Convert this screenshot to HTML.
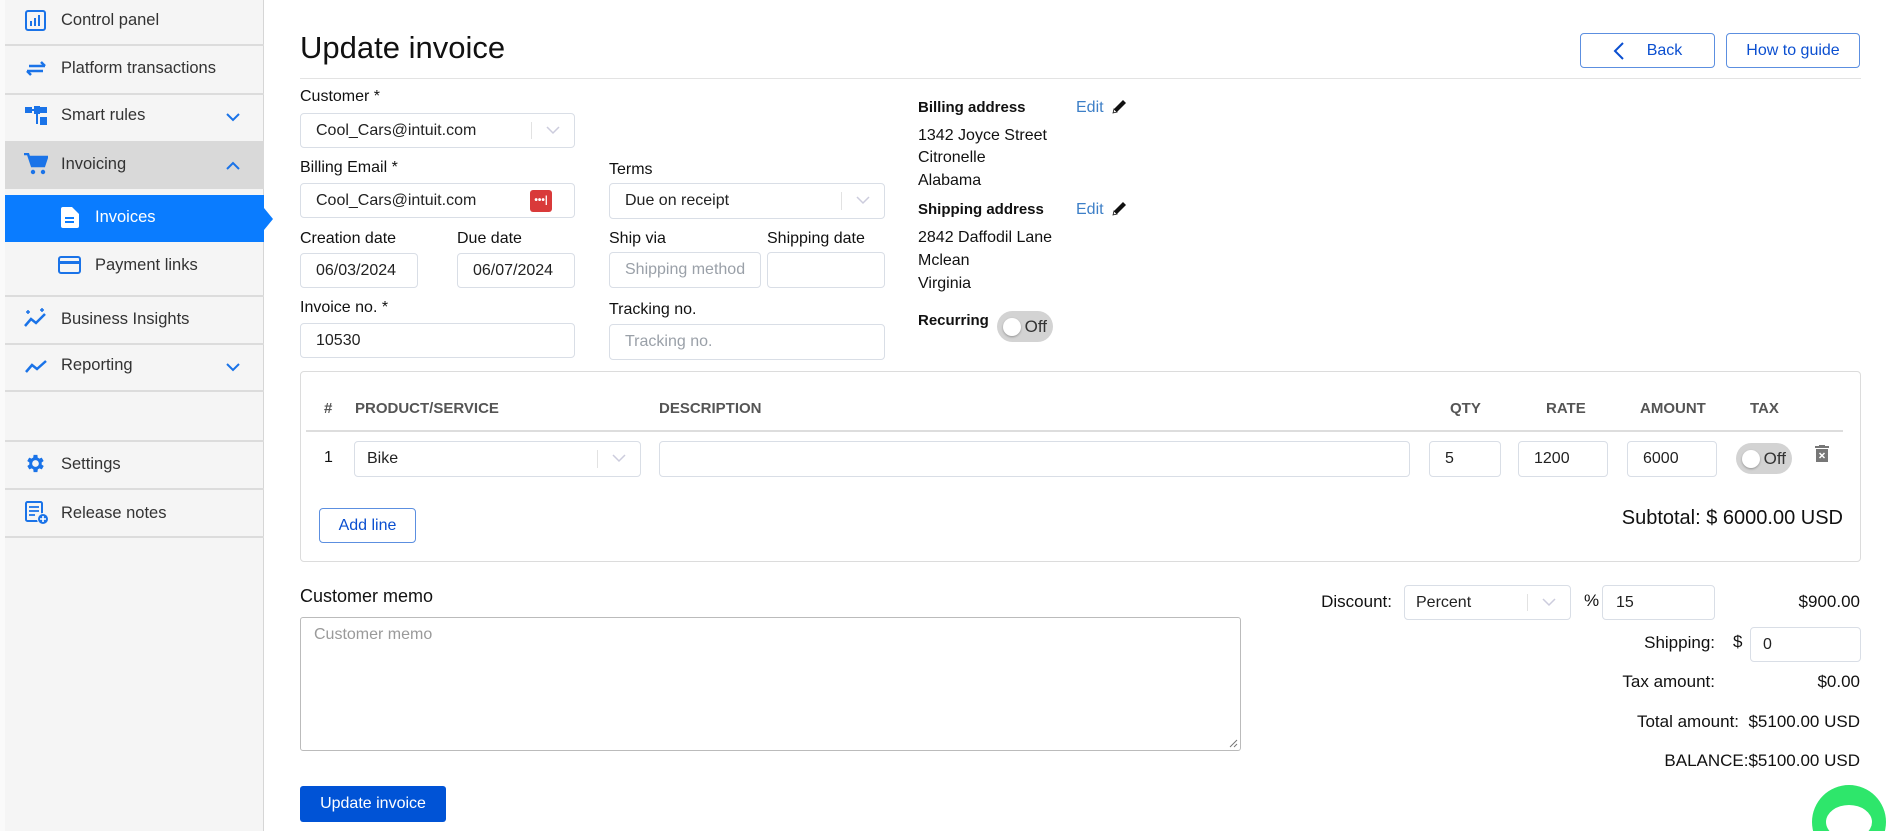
<!DOCTYPE html>
<html><head><meta charset="utf-8"><style>
*{box-sizing:border-box;margin:0;padding:0}
body{width:1900px;height:831px;overflow:hidden;background:#fff;font-family:"Liberation Sans",Arial,sans-serif;color:#111;position:relative;font-size:16px}
.a{position:absolute}
.sb{left:5px;top:0;width:259px;height:831px;background:#f5f5f5;border-right:1px solid #d6d6d6}
.sbl{left:0;top:0;width:5px;height:831px;background:#fafafa}
.hr{position:absolute;left:5px;width:259px;height:2px;background:#dcdcdc}
.it{position:absolute;left:61px;font-size:16.5px;color:#333;line-height:20px}
.ic{position:absolute}
.lbl{position:absolute;font-size:16px;color:#111;line-height:18px}
.inp{position:absolute;border:1px solid #d9dee6;border-radius:4px;background:#fff;font-size:16px;color:#222;padding-left:15px;display:flex;align-items:center}
.ph{color:#9aa0a8}
.sel::after{content:"";position:absolute;right:42px;top:8px;height:calc(100% - 16px);border-left:1px solid #e2e2e2}
.chev{position:absolute;right:14px;top:50%;margin-top:-6px}
.btn{position:absolute;border:1px solid #5c8fe0;border-radius:4px;color:#0b4fd0;font-size:16px;display:flex;align-items:center;justify-content:center;background:#fff}
.th{position:absolute;top:400px;font-size:15px;font-weight:bold;color:#555;line-height:18px}
.tog{position:absolute;background:#d3d3d3;border-radius:16px}
.tog .k{position:absolute;left:6px;top:50%;margin-top:-9px;width:18px;height:18px;border-radius:50%;background:#fff;box-shadow:0 1px 2px rgba(0,0,0,.3)}
.tog span{position:absolute;right:6px;top:50%;margin-top:-10px;font-size:17px;color:#333}
.r{position:absolute;font-size:16px;color:#111;text-align:right}
.b{font-weight:bold;font-size:15px}
</style></head><body>
<div class="a sbl"></div>
<div class="a sb"></div>
<div class="hr" style="top:44px"></div>
<div class="hr" style="top:93px"></div>
<div class="a" style="left:5px;top:141px;width:259px;height:48px;background:#d9d9d9"></div>
<div class="a" style="left:5px;top:195px;width:259px;height:47px;background:#0a7cff"></div>
<svg class="a" style="left:264px;top:208px" width="10" height="22"><path d="M0 0L9 11L0 22Z" fill="#0a7cff"/></svg>
<div class="hr" style="top:295px"></div>
<div class="hr" style="top:343px"></div>
<div class="hr" style="top:390px"></div>
<div class="hr" style="top:440px"></div>
<div class="hr" style="top:488px"></div>
<div class="hr" style="top:536px"></div>

<svg class="ic" style="left:25px;top:10px" width="21" height="21" viewBox="0 0 21 21"><rect x="1" y="1" width="19" height="19" rx="2" fill="none" stroke="#1a73e8" stroke-width="2"/><rect x="5" y="11" width="2" height="5" fill="#1a73e8"/><rect x="9" y="8" width="2" height="8" fill="#1a73e8"/><rect x="13" y="5" width="2" height="11" fill="#1a73e8"/></svg>
<div class="it" style="top:10px">Control panel</div>
<svg class="ic" style="left:25px;top:59px" width="22" height="18" viewBox="0 0 22 18"><path d="M4 7H20M16 3l4 4M2 12H18M6 16l-4-4" stroke="#1a73e8" stroke-width="2.5" fill="none"/></svg>
<div class="it" style="top:58px">Platform transactions</div>
<svg class="ic" style="left:25px;top:106px" width="23" height="20" viewBox="0 0 23 20"><rect x="0" y="1" width="7" height="6" fill="#1a73e8"/><rect x="9" y="0" width="6" height="8" fill="#1a73e8"/><rect x="15" y="1" width="7" height="6" fill="#1a73e8"/><rect x="11" y="8" width="2" height="10" fill="#1a73e8"/><rect x="15" y="11" width="7" height="8" fill="#1a73e8"/><rect x="7" y="3" width="3" height="2" fill="#1a73e8"/></svg>
<div class="it" style="top:105px">Smart rules</div>
<svg class="ic" style="left:226px;top:113px" width="14" height="9"><path d="M1 1l6 6 6-6" stroke="#1a73e8" stroke-width="2" fill="none"/></svg>
<svg class="ic" style="left:24px;top:153px" width="24" height="22" viewBox="0 0 24 22"><path d="M0 1h4l4 12h12l3-9H6" stroke="#1a73e8" stroke-width="2.5" fill="none"/><path d="M6 4h17l-3 9H8z" fill="#1a73e8"/><circle cx="9" cy="19" r="2.2" fill="#1a73e8"/><circle cx="19" cy="19" r="2.2" fill="#1a73e8"/></svg>
<div class="it" style="top:154px">Invoicing</div>
<svg class="ic" style="left:226px;top:161px" width="14" height="9"><path d="M1 8l6-6 6 6" stroke="#1a73e8" stroke-width="2" fill="none"/></svg>
<svg class="ic" style="left:61px;top:207px" width="18" height="21" viewBox="0 0 18 21"><path d="M2 0h9l7 7v12a2 2 0 0 1-2 2H2a2 2 0 0 1-2-2V2a2 2 0 0 1 2-2z" fill="#fff"/><path d="M4 11h9M4 15h9" stroke="#0a7cff" stroke-width="2"/></svg>
<div class="it" style="top:207px;left:95px;color:#fff">Invoices</div>
<svg class="ic" style="left:58px;top:256px" width="23" height="18" viewBox="0 0 23 18"><rect x="1" y="1" width="21" height="16" rx="2" fill="none" stroke="#1a73e8" stroke-width="2"/><rect x="1" y="5" width="21" height="3" fill="#1a73e8"/></svg>
<div class="it" style="top:255px;left:95px">Payment links</div>
<svg class="ic" style="left:23px;top:308px" width="26" height="20" viewBox="0 0 26 20"><path d="M2 18l6-7 5 4 9-9" stroke="#1a73e8" stroke-width="2.5" fill="none"/><path d="M5 2v4M3 4h4M19 0v4M17 2h4" stroke="#1a73e8" stroke-width="1.5"/></svg>
<div class="it" style="top:309px">Business Insights</div>
<svg class="ic" style="left:25px;top:359px" width="23" height="14" viewBox="0 0 23 14"><path d="M1 13l6-7 5 4 9-8" stroke="#1a73e8" stroke-width="2.5" fill="none"/></svg>
<div class="it" style="top:355px">Reporting</div>
<svg class="ic" style="left:226px;top:363px" width="14" height="9"><path d="M1 1l6 6 6-6" stroke="#1a73e8" stroke-width="2" fill="none"/></svg>
<svg class="ic" style="left:24px;top:452px" width="23" height="23" viewBox="0 0 24 24"><path fill="#1a73e8" d="M19.4 13a7.5 7.5 0 0 0 0-2l2.1-1.6-2-3.5-2.5 1a7.3 7.3 0 0 0-1.7-1L15 3h-4l-.4 2.9a7.3 7.3 0 0 0-1.7 1l-2.5-1-2 3.5L6.6 11a7.5 7.5 0 0 0 0 2l-2.1 1.6 2 3.5 2.5-1a7.3 7.3 0 0 0 1.7 1L11 21h4l.4-2.9a7.3 7.3 0 0 0 1.7-1l2.5 1 2-3.5zM13 15.5a3.5 3.5 0 1 1 0-7 3.5 3.5 0 0 1 0 7z" transform="translate(-1 0)"/></svg>
<div class="it" style="top:454px">Settings</div>
<svg class="ic" style="left:25px;top:501px" width="24" height="24" viewBox="0 0 24 24"><rect x="1" y="1" width="16" height="19" rx="1.5" fill="none" stroke="#1a73e8" stroke-width="2"/><path d="M4 6h10M4 10h10M4 14h6" stroke="#1a73e8" stroke-width="1.8"/><circle cx="18" cy="18" r="5.5" fill="#1a73e8" stroke="#f5f5f5" stroke-width="1"/><path d="M18 15v6M15 18h6" stroke="#fff" stroke-width="1.6"/></svg>
<div class="it" style="top:503px">Release notes</div>

<!-- Header -->
<div class="a" style="left:300px;top:30px;font-size:31px;color:#111">Update invoice</div>
<div class="a" style="left:300px;top:78px;width:1561px;height:1px;background:#e3e3e3"></div>
<div class="btn" style="left:1580px;top:33px;width:135px;height:35px"><svg width="12" height="18" style="margin-right:22px"><path d="M10 1L2 9l8 8" stroke="#0b4fd0" stroke-width="2" fill="none"/></svg>Back</div>
<div class="btn" style="left:1726px;top:33px;width:134px;height:35px">How to guide</div>

<!-- Form -->
<div class="lbl" style="left:300px;top:88px">Customer *</div>
<div class="inp sel" style="left:300px;top:113px;width:275px;height:35px">Cool_Cars@intuit.com<svg class="chev" width="14" height="10"><path d="M1 2l6 6 6-6" stroke="#ccd" stroke-width="1.5" fill="none"/></svg></div>
<div class="lbl" style="left:300px;top:159px">Billing Email *</div>
<div class="inp" style="left:300px;top:183px;width:275px;height:35px">Cool_Cars@intuit.com<div class="a" style="left:229px;top:6px;width:22px;height:22px;background:#d93a3a;border-radius:3px;color:#fff;font-size:10px;line-height:22px;text-align:center;font-weight:bold">•••|</div></div>
<div class="lbl" style="left:609px;top:161px">Terms</div>
<div class="inp sel" style="left:609px;top:183px;width:276px;height:36px">Due on receipt<svg class="chev" width="14" height="10"><path d="M1 2l6 6 6-6" stroke="#ccd" stroke-width="1.5" fill="none"/></svg></div>
<div class="lbl" style="left:300px;top:230px">Creation date</div>
<div class="lbl" style="left:457px;top:230px">Due date</div>
<div class="lbl" style="left:609px;top:230px">Ship via</div>
<div class="lbl" style="left:767px;top:230px">Shipping date</div>
<div class="inp" style="left:300px;top:253px;width:118px;height:35px">06/03/2024</div>
<div class="inp" style="left:457px;top:253px;width:118px;height:35px">06/07/2024</div>
<div class="inp ph" style="left:609px;top:252px;width:152px;height:36px">Shipping method</div>
<div class="inp" style="left:767px;top:252px;width:118px;height:36px"></div>
<div class="lbl" style="left:300px;top:299px">Invoice no. *</div>
<div class="inp" style="left:300px;top:323px;width:275px;height:35px">10530</div>
<div class="lbl" style="left:609px;top:301px">Tracking no.</div>
<div class="inp ph" style="left:609px;top:324px;width:276px;height:36px">Tracking no.</div>

<div class="lbl b" style="left:918px;top:99px">Billing address</div>
<div class="lbl" style="left:1076px;top:99px;color:#3d7fc7">Edit</div>
<svg class="a" style="left:1111px;top:98px" width="16" height="17" viewBox="0 0 16 17"><path d="M2 15l1-4 9-9 3 3-9 9z" fill="#111"/><path d="M2 15l1-4 3 3z" fill="#fff" stroke="#111" stroke-width=".8"/></svg>
<div class="lbl" style="left:918px;top:127px">1342 Joyce Street</div>
<div class="lbl" style="left:918px;top:149px">Citronelle</div>
<div class="lbl" style="left:918px;top:172px">Alabama</div>
<div class="lbl b" style="left:918px;top:201px">Shipping address</div>
<div class="lbl" style="left:1076px;top:201px;color:#3d7fc7">Edit</div>
<svg class="a" style="left:1111px;top:200px" width="16" height="17" viewBox="0 0 16 17"><path d="M2 15l1-4 9-9 3 3-9 9z" fill="#111"/><path d="M2 15l1-4 3 3z" fill="#fff" stroke="#111" stroke-width=".8"/></svg>
<div class="lbl" style="left:918px;top:229px">2842 Daffodil Lane</div>
<div class="lbl" style="left:918px;top:252px">Mclean</div>
<div class="lbl" style="left:918px;top:275px">Virginia</div>
<div class="lbl b" style="left:918px;top:312px">Recurring</div>
<div class="tog" style="left:997px;top:311px;width:56px;height:31px"><div class="k"></div><span>Off</span></div>

<!-- Table card -->
<div class="a" style="left:300px;top:371px;width:1561px;height:191px;border:1px solid #dcdcdc;border-radius:4px"></div>
<div class="th" style="left:324px">#</div>
<div class="th" style="left:355px">PRODUCT/SERVICE</div>
<div class="th" style="left:659px">DESCRIPTION</div>
<div class="th" style="left:1450px">QTY</div>
<div class="th" style="left:1546px">RATE</div>
<div class="th" style="left:1640px">AMOUNT</div>
<div class="th" style="left:1750px">TAX</div>
<div class="a" style="left:306px;top:430px;width:1537px;height:2px;background:#ddd"></div>
<div class="lbl" style="left:324px;top:449px">1</div>
<div class="inp sel" style="left:354px;top:441px;width:287px;height:36px;padding-left:12px">Bike<svg class="chev" width="14" height="10"><path d="M1 2l6 6 6-6" stroke="#ccd" stroke-width="1.5" fill="none"/></svg></div>
<div class="inp" style="left:659px;top:441px;width:751px;height:36px"></div>
<div class="inp" style="left:1429px;top:441px;width:72px;height:36px">5</div>
<div class="inp" style="left:1518px;top:441px;width:90px;height:36px">1200</div>
<div class="inp" style="left:1627px;top:441px;width:90px;height:36px">6000</div>
<div class="tog" style="left:1736px;top:443px;width:56px;height:31px"><div class="k"></div><span>Off</span></div>
<svg class="a" style="left:1815px;top:445px" width="14" height="17" viewBox="0 0 14 17"><rect x="0" y="1" width="14" height="2" fill="#777"/><rect x="4" y="0" width="6" height="2" fill="#777"/><rect x="1" y="4" width="12" height="13" fill="#777"/><path d="M4.5 8l5 5M9.5 8l-5 5" stroke="#fff" stroke-width="1.5"/></svg>
<div class="btn" style="left:319px;top:508px;width:97px;height:35px">Add line</div>
<div class="r" style="right:57px;top:507px;font-size:20px">Subtotal: $ 6000.00 USD</div>

<!-- Memo -->
<div class="lbl" style="left:300px;top:587px;font-size:18px">Customer memo</div>
<div class="a" style="left:300px;top:617px;width:941px;height:134px;border:1px solid #bbb;border-radius:3px;padding:8px 13px;color:#9a9a9a;font-size:16px">Customer memo</div>
<svg class="a" style="left:1229px;top:739px" width="9" height="9"><path d="M8 1L1 8M8 5L5 8" stroke="#777"/></svg>
<div class="a" style="left:300px;top:786px;width:146px;height:36px;background:#0053d6;border-radius:3px;color:#fff;font-size:16px;display:flex;align-items:center;justify-content:center">Update invoice</div>

<!-- Totals -->
<div class="r" style="right:508px;top:592px;font-size:17px">Discount:</div>
<div class="inp sel" style="left:1404px;top:585px;width:167px;height:35px;padding-left:11px">Percent<svg class="chev" width="14" height="10"><path d="M1 2l6 6 6-6" stroke="#ccd" stroke-width="1.5" fill="none"/></svg></div>
<div class="lbl" style="left:1584px;top:592px;font-size:17px">%</div>
<div class="inp" style="left:1602px;top:585px;width:113px;height:35px;padding-left:13px">15</div>
<div class="r" style="right:40px;top:592px;font-size:17px">$900.00</div>
<div class="r" style="right:185px;top:633px;font-size:17px">Shipping:</div>
<div class="lbl" style="left:1733px;top:633px;font-size:17px">$</div>
<div class="inp" style="left:1750px;top:627px;width:111px;height:35px;padding-left:12px">0</div>
<div class="r" style="right:185px;top:672px;font-size:17px">Tax amount:</div>
<div class="r" style="right:40px;top:672px;font-size:17px">$0.00</div>
<div class="r" style="right:40px;top:712px;font-size:17px">Total amount:&nbsp; $5100.00 USD</div>
<div class="r" style="right:40px;top:751px;font-size:17px">BALANCE:$5100.00 USD</div>

<svg class="a" style="left:1810px;top:784px" width="80" height="47"><path fill="#2ee66b" fill-rule="evenodd" d="M39 1a37 37 0 1 1 0 74a37 37 0 1 1 0-74zM39 21a23 17 0 1 0 0 34a23 17 0 1 0 0-34z"/></svg>
</body></html>
